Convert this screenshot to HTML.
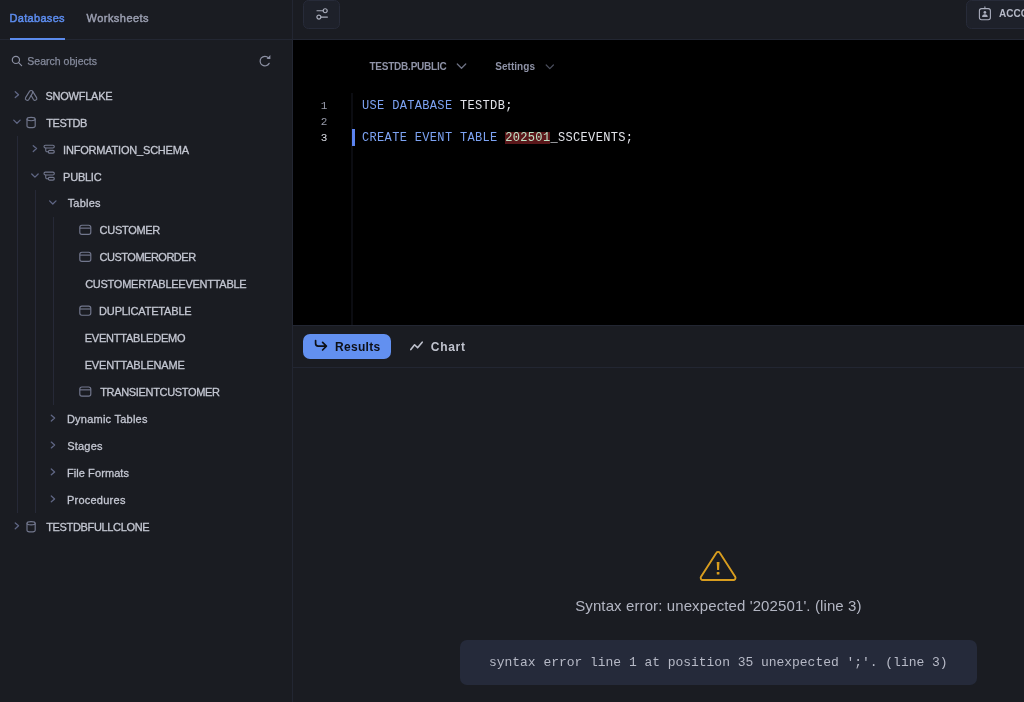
<!DOCTYPE html>
<html lang="en">
<head>
<meta charset="utf-8">
<title>Worksheet</title>
<style>
*{box-sizing:border-box;margin:0;padding:0}
html,body{width:1024px;height:702px;overflow:hidden;background:#1a1c22}
body{font-family:"Liberation Sans",sans-serif;color:#c4c7d2;position:relative}
#fg{position:absolute;left:0;top:0;width:1024px;height:702px;will-change:transform}
#side{position:absolute;left:0;top:0;width:293px;height:702px;background:#1a1c22;border-right:1px solid #222632}
#tabs{position:absolute;left:0;top:0;width:292px;height:40px;border-bottom:1px solid #232733}
.tab{position:absolute;top:11px;height:14px;line-height:14px;font-size:11px;white-space:nowrap;letter-spacing:0.3px;-webkit-text-stroke:0.45px currentColor}
#tab1{left:9.6px;color:#5d8df0}
#tab1u{position:absolute;left:10px;top:38px;width:55px;height:2px;background:#5b8aec}
#tab2{left:86.6px;color:#9b9fb1;letter-spacing:0.45px}
.t{position:absolute;white-space:nowrap;font-size:11px;line-height:14px;color:#c4c7d2;-webkit-text-stroke:0.3px #c4c7d2}
.ico{position:absolute;overflow:visible}
.gl{position:absolute;width:1px;background:#262937}
#search{position:absolute;left:27.3px;top:54px;font-size:10.5px;line-height:15px;color:#858a9c;white-space:nowrap;letter-spacing:0.02px;-webkit-text-stroke:0.25px #858a9c}
#top{position:absolute;left:293px;top:0;width:731px;height:40px;background:#1a1c22;border-bottom:1px solid #222632}
.btn{position:absolute;background:#1e212a;border:1px solid #272b39;border-radius:5.5px}
#editor{position:absolute;left:293px;top:40px;width:731px;height:285px;background:#000}
.mono{font-family:"Liberation Mono",monospace}
.code{position:absolute;white-space:pre;font-family:"Liberation Mono",monospace;font-size:12px;letter-spacing:0.335px;line-height:16px;color:#e3e4ea}
.kw{color:#7da3f3}
.num{color:#bfe3c6}
.ln{position:absolute;font-family:"Liberation Mono",monospace;font-size:11px;line-height:16px;color:#9a9dad}
.hd{position:absolute;font-size:10px;line-height:14px;font-weight:bold;color:#8f93a7;white-space:nowrap}
#rbar{position:absolute;left:293px;top:325px;width:731px;height:43px;background:#1a1c22;border-top:1px solid #222632;border-bottom:1px solid #222632}
#resbtn{position:absolute;left:303px;top:334px;width:88px;height:25px;border-radius:7px;background:#6290f0}
.rt{position:absolute;font-size:12px;line-height:16px;font-weight:bold;white-space:nowrap}
#errmsg{position:absolute;left:575.2px;top:596px;font-size:15px;line-height:20px;color:#b3b6c3;white-space:nowrap;letter-spacing:0.11px}
#errbox{position:absolute;left:460px;top:640px;width:517px;height:45px;border-radius:7px;background:#252a3a}
#errtxt{position:absolute;left:489px;top:654px;font-family:"Liberation Mono",monospace;font-size:13px;line-height:18px;color:#b6b9c6;white-space:pre;letter-spacing:-0.03px}
</style>
</head>
<body>
<div id="fg">
<div id="side">
  <div id="tabs"></div>
  <div class="tab" id="tab1">Databases</div>
  <div id="tab1u"></div>
  <div class="tab" id="tab2">Worksheets</div>
  <svg class="ico" style="left:10px;top:54px" width="14" height="14" viewBox="0 0 14 14"><g fill="none" stroke="#8c90a3" stroke-width="1.2" stroke-linecap="round"><circle cx="5.9" cy="5.9" r="3.6"/><path d="M8.6 8.6 L11.6 11.6"/></g></svg>
  <div id="search">Search objects</div>
  <svg class="ico" style="left:256px;top:53px" width="16" height="16" viewBox="0 0 16 16"><g transform="translate(8.90 8.10)"><path d="M3.55 -3.25 A4.8 4.8 0 1 0 4.25 2.3" fill="none" stroke="#8c90a3" stroke-width="1.2" stroke-linecap="round"/><path d="M5.45 -6.0 V-2.2 H1.65 Z" fill="#8c90a3"/></g></svg>
  <div class="gl" style="left:17px;top:136px;height:377px"></div>
  <div class="gl" style="left:35px;top:190px;height:323px"></div>
  <div class="gl" style="left:53px;top:217px;height:188px"></div>
<div class="t" id="r0" style="left:45.41px;top:89.0px;letter-spacing:-0.237px">SNOWFLAKE</div>
<svg class="ico" style="left:11px;top:88px" width="10" height="12" viewBox="0 0 10 12"><g transform="translate(5.90 6.65)"><path d="M-1.65 -2.9 L1.65 0 L-1.65 2.9" fill="none" stroke="#5f6684" stroke-width="1.3" stroke-linecap="round" stroke-linejoin="round"/></g></svg>
<svg class="ico" style="left:23px;top:88px" width="16" height="14" viewBox="0 0 16 14"><g transform="translate(8.10 7.50)"><g fill="none" stroke="#72778d" stroke-width="1.15" stroke-linecap="round" stroke-linejoin="round"><path d="M-1.6 -4.1 a1.85 1.85 0 0 1 3.2 0 L1.2 -2.1 L-2.3 4.0 a1.85 1.85 0 0 1 -3.2 -1.85 Z"/><path d="M0.1 -0.1 L2.3 4.0 a1.85 1.85 0 0 0 3.2 -1.85 L1.6 -4.1"/></g></g></svg>
<div class="t" id="r1" style="left:46.37px;top:116.0px;letter-spacing:-0.500px">TESTDB</div>
<svg class="ico" style="left:10px;top:116px" width="12" height="10" viewBox="0 0 12 10"><g transform="translate(6.95 5.65)"><path d="M-3.2 -1.55 L0 1.55 L3.2 -1.55" fill="none" stroke="#5f6684" stroke-width="1.3" stroke-linecap="round" stroke-linejoin="round"/></g></svg>
<svg class="ico" style="left:25px;top:115px" width="12" height="14" viewBox="0 0 12 14"><g transform="translate(6.10 7.35)"><g fill="none" stroke="#72778d" stroke-width="1.15"><path d="M-4.1 -3.3 C-4.1 -5.6 4.1 -5.6 4.1 -3.3 L4.1 3.6 C4.1 5.9 -4.1 5.9 -4.1 3.6 Z"/><path d="M-4.1 -3.3 C-4.1 -1.1 4.1 -1.1 4.1 -3.3"/></g></g></svg>
<div class="t" id="r2" style="left:63.12px;top:143.0px;letter-spacing:-0.201px">INFORMATION_SCHEMA</div>
<svg class="ico" style="left:29px;top:142px" width="10" height="12" viewBox="0 0 10 12"><g transform="translate(5.90 6.55)"><path d="M-1.65 -2.9 L1.65 0 L-1.65 2.9" fill="none" stroke="#5f6684" stroke-width="1.3" stroke-linecap="round" stroke-linejoin="round"/></g></svg>
<svg class="ico" style="left:42px;top:143px" width="14" height="12" viewBox="0 0 14 12"><g transform="translate(7.15 6.20)"><g fill="none" stroke="#72778d" stroke-width="1.1" stroke-linecap="round"><rect x="-5.15" y="-4.0" width="10.3" height="2.8" rx="1.4"/><rect x="-0.9" y="1.2" width="6.05" height="2.75" rx="1.37"/><path d="M-3.4 -1.2 V1.3 a1.3 1.3 0 0 0 1.3 1.3 H-0.9"/></g></g></svg>
<div class="t" id="r3" style="left:63.12px;top:170.0px;letter-spacing:-0.250px">PUBLIC</div>
<svg class="ico" style="left:28px;top:170px" width="12" height="10" viewBox="0 0 12 10"><g transform="translate(6.95 5.55)"><path d="M-3.2 -1.55 L0 1.55 L3.2 -1.55" fill="none" stroke="#5f6684" stroke-width="1.3" stroke-linecap="round" stroke-linejoin="round"/></g></svg>
<svg class="ico" style="left:42px;top:170px" width="14" height="12" viewBox="0 0 14 12"><g transform="translate(7.15 6.15)"><g fill="none" stroke="#72778d" stroke-width="1.1" stroke-linecap="round"><rect x="-5.15" y="-4.0" width="10.3" height="2.8" rx="1.4"/><rect x="-0.9" y="1.2" width="6.05" height="2.75" rx="1.37"/><path d="M-3.4 -1.2 V1.3 a1.3 1.3 0 0 0 1.3 1.3 H-0.9"/></g></g></svg>
<div class="t" id="r4" style="left:67.66px;top:196.0px;letter-spacing:0.200px">Tables</div>
<svg class="ico" style="left:46px;top:197px" width="12" height="10" viewBox="0 0 12 10"><g transform="translate(6.80 5.40)"><path d="M-3.2 -1.55 L0 1.55 L3.2 -1.55" fill="none" stroke="#5f6684" stroke-width="1.3" stroke-linecap="round" stroke-linejoin="round"/></g></svg>
<div class="t" id="r5" style="left:99.62px;top:223.0px;letter-spacing:-0.301px">CUSTOMER</div>
<svg class="ico" style="left:77px;top:222px" width="16" height="14" viewBox="0 0 16 14"><g transform="translate(8.30 7.75)"><g fill="none" stroke="#72778d" stroke-width="1.15"><rect x="-5.5" y="-4.5" width="11" height="9.1" rx="2.1"/><path d="M-5.5 -1.6 H5.5"/></g></g></svg>
<div class="t" id="r6" style="left:99.62px;top:250.0px;letter-spacing:-0.500px">CUSTOMERORDER</div>
<svg class="ico" style="left:77px;top:249px" width="16" height="14" viewBox="0 0 16 14"><g transform="translate(8.30 7.70)"><g fill="none" stroke="#72778d" stroke-width="1.15"><rect x="-5.5" y="-4.5" width="11" height="9.1" rx="2.1"/><path d="M-5.5 -1.6 H5.5"/></g></g></svg>
<div class="t" id="r7" style="left:85.19px;top:277.0px;letter-spacing:-0.265px">CUSTOMERTABLEEVENTTABLE</div>
<div class="t" id="r8" style="left:99.12px;top:304.0px;letter-spacing:-0.184px">DUPLICATETABLE</div>
<svg class="ico" style="left:77px;top:303px" width="16" height="14" viewBox="0 0 16 14"><g transform="translate(8.30 7.60)"><g fill="none" stroke="#72778d" stroke-width="1.15"><rect x="-5.5" y="-4.5" width="11" height="9.1" rx="2.1"/><path d="M-5.5 -1.6 H5.5"/></g></g></svg>
<div class="t" id="r9" style="left:84.69px;top:331.0px;letter-spacing:-0.220px">EVENTTABLEDEMO</div>
<div class="t" id="r10" style="left:84.69px;top:358.0px;letter-spacing:-0.179px">EVENTTABLENAME</div>
<div class="t" id="r11" style="left:100.15px;top:385.0px;letter-spacing:-0.328px">TRANSIENTCUSTOMER</div>
<svg class="ico" style="left:77px;top:384px" width="16" height="14" viewBox="0 0 16 14"><g transform="translate(8.30 7.45)"><g fill="none" stroke="#72778d" stroke-width="1.15"><rect x="-5.5" y="-4.5" width="11" height="9.1" rx="2.1"/><path d="M-5.5 -1.6 H5.5"/></g></g></svg>
<div class="t" id="r12" style="left:66.90px;top:412.0px;letter-spacing:0.241px">Dynamic Tables</div>
<svg class="ico" style="left:47px;top:412px" width="10" height="12" viewBox="0 0 10 12"><g transform="translate(5.95 6.05)"><path d="M-1.65 -2.9 L1.65 0 L-1.65 2.9" fill="none" stroke="#5f6684" stroke-width="1.3" stroke-linecap="round" stroke-linejoin="round"/></g></svg>
<div class="t" id="r13" style="left:67.15px;top:439.0px;letter-spacing:0.240px">Stages</div>
<svg class="ico" style="left:47px;top:438px" width="10" height="12" viewBox="0 0 10 12"><g transform="translate(5.95 7.00)"><path d="M-1.65 -2.9 L1.65 0 L-1.65 2.9" fill="none" stroke="#5f6684" stroke-width="1.3" stroke-linecap="round" stroke-linejoin="round"/></g></svg>
<div class="t" id="r14" style="left:66.89px;top:466.0px;letter-spacing:0.091px">File Formats</div>
<svg class="ico" style="left:47px;top:465px" width="10" height="12" viewBox="0 0 10 12"><g transform="translate(5.95 6.95)"><path d="M-1.65 -2.9 L1.65 0 L-1.65 2.9" fill="none" stroke="#5f6684" stroke-width="1.3" stroke-linecap="round" stroke-linejoin="round"/></g></svg>
<div class="t" id="r15" style="left:66.89px;top:493.0px;letter-spacing:0.251px">Procedures</div>
<svg class="ico" style="left:47px;top:492px" width="10" height="12" viewBox="0 0 10 12"><g transform="translate(5.95 6.90)"><path d="M-1.65 -2.9 L1.65 0 L-1.65 2.9" fill="none" stroke="#5f6684" stroke-width="1.3" stroke-linecap="round" stroke-linejoin="round"/></g></svg>
<div class="t" id="r16" style="left:46.14px;top:520.0px;letter-spacing:-0.337px">TESTDBFULLCLONE</div>
<svg class="ico" style="left:11px;top:519px" width="10" height="12" viewBox="0 0 10 12"><g transform="translate(5.90 6.85)"><path d="M-1.65 -2.9 L1.65 0 L-1.65 2.9" fill="none" stroke="#5f6684" stroke-width="1.3" stroke-linecap="round" stroke-linejoin="round"/></g></svg>
<svg class="ico" style="left:25px;top:519px" width="12" height="14" viewBox="0 0 12 14"><g transform="translate(6.10 7.60)"><g fill="none" stroke="#72778d" stroke-width="1.15"><path d="M-4.1 -3.3 C-4.1 -5.6 4.1 -5.6 4.1 -3.3 L4.1 3.6 C4.1 5.9 -4.1 5.9 -4.1 3.6 Z"/><path d="M-4.1 -3.3 C-4.1 -1.1 4.1 -1.1 4.1 -3.3"/></g></g></svg>
</div>
<div id="top">
</div>
<div class="btn" style="left:303px;top:0px;width:37px;height:29px"></div>
<svg class="ico" style="left:313px;top:6px" width="18" height="14" viewBox="0 0 18 14"><g transform="translate(9.20 7.90)"><g fill="none" stroke="#a9adbb" stroke-width="1.2" stroke-linecap="round"><path d="M-5.2 -3.15 H0.9"/><circle cx="3.0" cy="-3.15" r="2.0"/><path d="M-1.2 3.2 H5.2"/><circle cx="-3.3" cy="3.2" r="2.0"/></g></g></svg>
<div class="btn" style="left:966px;top:0px;width:70px;height:29px"></div>
<svg class="ico" style="left:977px;top:6px" width="16" height="16" viewBox="0 0 16 16"><g fill="none" stroke="#a9adbc" stroke-width="1.1" stroke-linecap="round"><rect x="2.4" y="2.6" width="11" height="11.2" rx="2.2"/><path d="M7.9 0.9 V2.6"/></g><circle cx="7.9" cy="6.4" r="1.4" fill="#a9adbc"/><path d="M5.1 10.9 a2.8 2.6 0 0 1 5.6 0 Z" fill="#a9adbc"/></svg>
<div class="hd" style="left:999px;top:7px;color:#b6b9c7">ACCOUNTADMIN</div>
<div id="editor"></div>
<div class="hd" id="h1" style="left:369.4px;top:60px;letter-spacing:-0.22px">TESTDB.PUBLIC</div>
<svg class="ico" style="left:455px;top:61px" width="13" height="10" viewBox="0 0 13 10"><path d="M2.3 3 L6.5 7.2 L10.7 3" fill="none" stroke="#6d7183" stroke-width="1.3" stroke-linecap="round" stroke-linejoin="round"/></svg>
<div class="hd" id="h2" style="left:495.2px;top:60px;letter-spacing:0.05px">Settings</div>
<svg class="ico" style="left:544px;top:62px" width="12" height="10" viewBox="0 0 12 10"><path d="M2.2 3 L5.8 6.6 L9.4 3" fill="none" stroke="#4b4f5e" stroke-width="1.2" stroke-linecap="round" stroke-linejoin="round"/></svg>
<div class="gl" style="left:351px;top:93px;width:2px;height:232px;background:#0b0c11"></div>
<div class="abs" style="position:absolute;left:351.5px;top:129px;width:3.4px;height:17px;background:#5b83f0"></div>
<div style="position:absolute;left:505px;top:131.5px;width:45px;height:12.6px;background:#5a171a"></div>
<div class="ln" style="left:320.8px;top:98px">1</div>
<div class="ln" style="left:320.8px;top:114px">2</div>
<div class="ln" style="left:320.8px;top:130px;color:#dcdee6">3</div>
<div class="code" id="c1" style="left:362px;top:98px"><span class="kw">USE DATABASE</span> TESTDB;</div>
<div class="code" id="c3" style="left:362px;top:130px"><span class="kw">CREATE EVENT TABLE</span> <span class="num">202501</span>_SSCEVENTS;</div>
<div id="rbar"></div>
<div id="resbtn"></div>
<svg class="ico" style="left:313px;top:338px" width="16" height="15" viewBox="0 0 16 15"><path d="M2.6 2.6 V5.6 a2.6 2.6 0 0 0 2.6 2.6 H13.2 M9.6 4.4 L13.4 8.2 L9.6 12" fill="none" stroke="#0e1016" stroke-width="1.7" stroke-linecap="round" stroke-linejoin="round"/></svg>
<div class="rt" id="rt1" style="left:335px;top:339px;color:#0e1016;letter-spacing:0.3px">Results</div>
<svg class="ico" style="left:409px;top:340px" width="15" height="12" viewBox="0 0 15 12"><path d="M1.8 9.6 L5.6 4.8 L8.6 7.8 L13.2 2.2" fill="none" stroke="#bfc2cd" stroke-width="1.6" stroke-linecap="round" stroke-linejoin="round"/></svg>
<div class="rt" id="rt2" style="left:430.8px;top:339px;color:#c0c3ce;letter-spacing:0.7px">Chart</div>
<svg class="ico" style="left:698px;top:548px" width="40" height="35" viewBox="0 0 40 35"><path d="M18.3 4.9 a2.1 2.1 0 0 1 3.6 0 L37.2 28.8 a2.1 2.1 0 0 1 -1.8 3.2 H4.8 a2.1 2.1 0 0 1 -1.8 -3.2 Z" fill="none" stroke="#d89d1f" stroke-width="1.9" stroke-linejoin="round"/><path d="M18.7 14.0 H21.5 L21.05 22.0 H19.15 Z" fill="#d89d1f"/><rect x="18.75" y="23.9" width="2.7" height="2.7" rx="0.7" fill="#d89d1f"/></svg>
<div id="errmsg">Syntax error: unexpected '202501'. (line 3)</div>
<div id="errbox"></div>
<div id="errtxt">syntax error line 1 at position 35 unexpected ';'. (line 3)</div>
</div>
</body>
</html>
